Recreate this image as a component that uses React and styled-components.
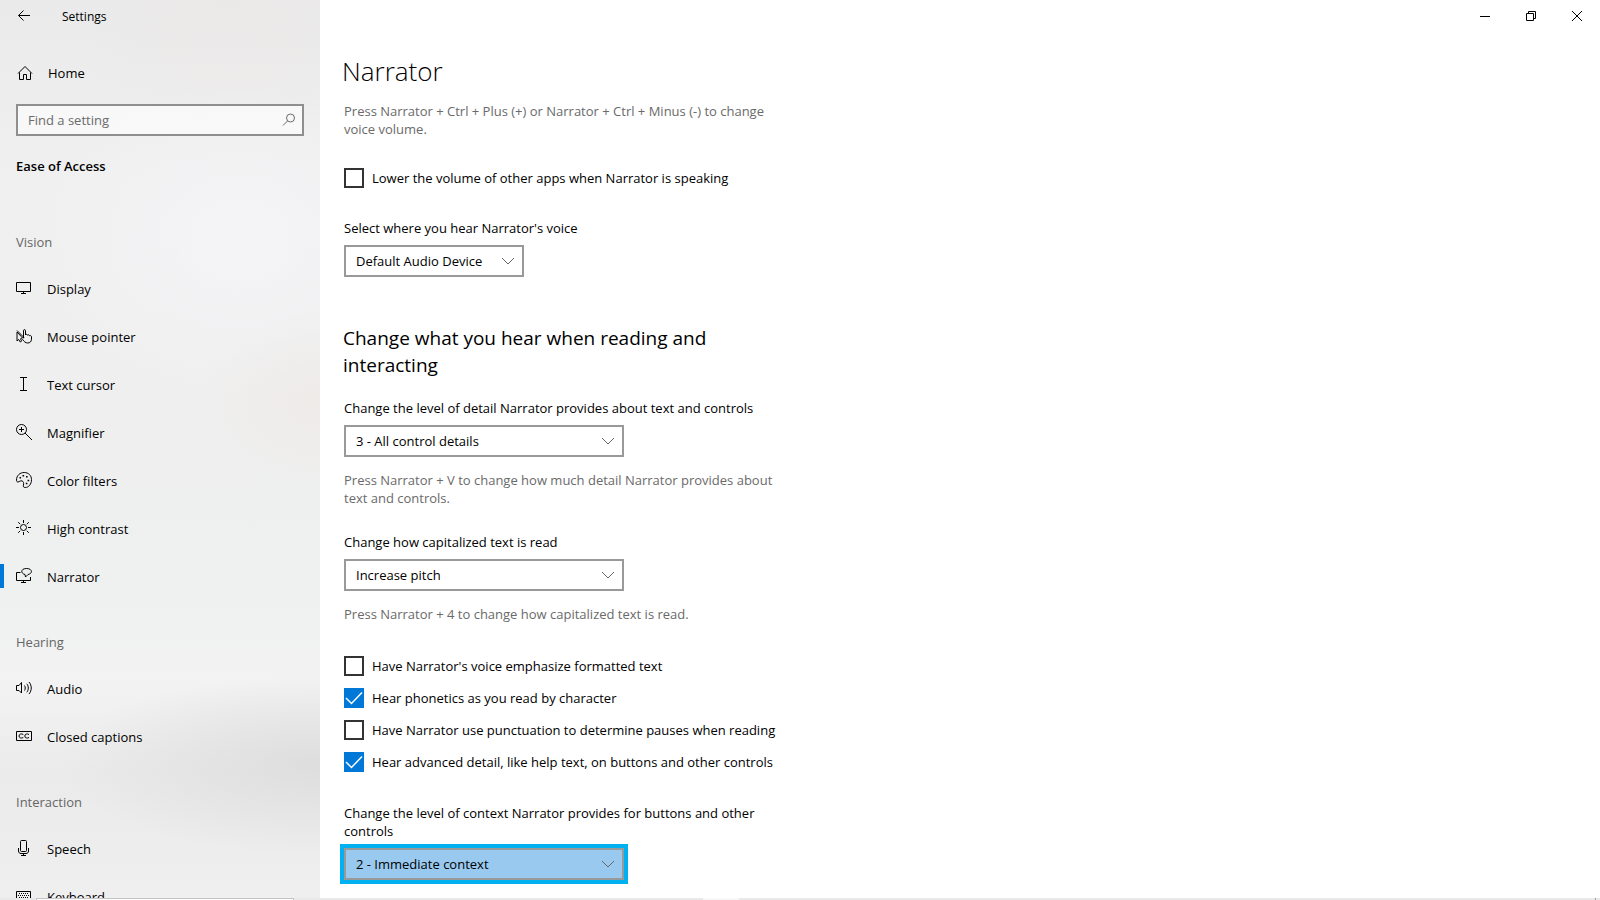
import React from "react";
import styled, { createGlobalStyle } from "styled-components";

const GlobalStyle = createGlobalStyle`
  *, *::before, *::after {
    box-sizing: border-box;
  }
  body {
    margin: 0;
    background-color: #fff;
    color: #000;
    font-family: "Open Sans", "Noto Sans", sans-serif;
    font-size: 13px;
    line-height: 18px;
  }
  button, input, select {
    font: inherit;
    color: inherit;
  }
`;

const Screen = styled.div`
  display: flex;
  flex-direction: column;
  height: 100vh;
  overflow: hidden;
`;

const Window = styled.div`
  display: flex;
  flex: 1;
  min-height: 0;
`;

const Taskbar = styled.footer`
  display: flex;
  height: 2px;
  background-color: #e9e9e9;
`;

const TaskbarSearch = styled.div`
  width: 258px;
  margin-left: 36px;
  border: 1px solid #c4c4c4;
  border-bottom: 0;
  background-color: #fdfdfd;
`;

const TaskbarActiveApp = styled.div`
  width: 36px;
  margin-left: 409px;
  background-color: #f8f8f8;
`;

const ShowDesktop = styled.div`
  width: 5px;
  margin-left: auto;
  border-left: 1px solid #a0a0a0;
`;

const Sidebar = styled.aside`
  display: flex;
  flex-direction: column;
  flex: 0 0 320px;
  overflow: hidden;
  background: radial-gradient(
      ellipse 260px 90px at 320px 765px,
      rgba(220, 220, 220, 0.9),
      transparent
    ),
    radial-gradient(
      ellipse 160px 120px at 230px 20px,
      rgba(236, 231, 230, 0.5),
      transparent
    ),
    radial-gradient(
      ellipse 120px 90px at 320px 400px,
      rgba(238, 234, 231, 0.8),
      transparent
    ),
    radial-gradient(
      ellipse 200px 160px at 240px 240px,
      rgba(245, 245, 248, 0.9),
      transparent
    ),
    linear-gradient(
      #eaeaea,
      #f0f0f0 180px,
      #efefef 420px,
      #eff0f0 600px,
      #f3f3f3 680px,
      #ebebeb 770px,
      #ececec 820px,
      #efefef
    );
`;

const SidebarTop = styled.div`
  display: flex;
  align-items: center;
  gap: 14px;
  height: 32px;
  font-size: 12px;
`;

const AppName = styled.span`
  padding-top: 2px;
`;

const CaptionButton = styled.button`
  display: flex;
  align-items: center;
  justify-content: center;
  width: ${props => props.$width || 46}px;
  height: 32px;
  padding: 0;
  border: 0;
  background: transparent;
`;

const Icon = styled.svg`
  flex: none;
  fill: none;
  stroke: currentColor;
  stroke-width: 1;
`;

const NavLink = styled.a`
  display: flex;
  align-items: center;
  gap: 15px;
  flex: none;
  position: relative;
  height: 48px;
  padding-left: 16px;
  color: inherit;
  text-decoration: none;
  &[aria-current="page"]::before {
    content: "";
    position: absolute;
    left: 0;
    top: 11px;
    width: 4px;
    height: 24px;
    background-color: #0078d7;
  }
`;

const HomeLink = styled(NavLink)`
  margin-top: 17px;
`;

const NavIcon = styled(Icon)`
  margin-bottom: 2px;
`;

const SearchBox = styled.label`
  display: flex;
  align-items: center;
  flex: none;
  height: 32px;
  margin: 7px 16px 0;
  padding: 0 6px 0 10px;
  border: 2px solid #8f8f8f;
  background-color: rgba(255, 255, 255, 0.6);
  color: #6a6a6a;
`;

const SearchInput = styled.input`
  flex: 1;
  min-width: 0;
  padding: 0;
  border: 0;
  outline: 0;
  background: transparent;
  &::placeholder {
    color: #6a6a6a;
    opacity: 1;
  }
`;

const Category = styled.h2`
  margin: 21px 16px 0;
  font-size: 13px;
  font-weight: 600;
`;

const GroupTitle = styled.h3`
  margin: 32px 16px 14px;
  font-size: 13px;
  font-weight: 400;
  color: #666;
`;

const Nav = styled.nav`
  display: flex;
  flex-direction: column;
  margin-top: 26px;
`;

const Main = styled.main`
  flex: 1;
  min-width: 0;
`;

const CaptionBar = styled.div`
  display: flex;
  justify-content: flex-end;
`;

const Content = styled.div`
  max-width: 472px;
  padding-left: 24px;
`;

const PageTitle = styled.h1`
  margin: 19px 0 11px -2px;
  font-size: 26px;
  font-weight: 300;
  line-height: 40px;
`;

const Hint = styled.p`
  margin: 0;
  color: #6a6a6a;
`;

const SectionTitle = styled.h2`
  max-width: 400px;
  margin: 48px 0 20px -1px;
  font-size: 19px;
  font-weight: 400;
  line-height: 27px;
`;

const Field = styled.div`
  margin-top: ${props => props.$space}px;
`;

const FieldLabel = styled.label`
  display: block;
  margin-bottom: 8px;
`;

const FieldHint = styled(Hint)`
  margin-top: 14px;
`;

const SelectWrapper = styled.div`
  display: grid;
  align-items: center;
  width: ${props => props.$width}px;
  color: #666;
`;

const Select = styled.select`
  grid-area: 1 / 1;
  appearance: none;
  height: 32px;
  padding: 0 32px 0 10px;
  border: 2px solid #999;
  border-radius: 0;
  background-color: ${props => (props.$focused ? "#99c9ef" : "#fff")};
  outline: ${props => (props.$focused ? "4px solid #00b0f0" : "0")};
  color: #000;
`;

const Chevron = styled(Icon)`
  grid-area: 1 / 1;
  justify-self: end;
  margin-right: 9px;
  pointer-events: none;
`;

const CheckRow = styled.label`
  display: flex;
  align-items: center;
  gap: 8px;
  min-height: 20px;
`;

const CheckBox = styled.span`
  display: grid;
  flex: none;
`;

const CheckInput = styled.input`
  grid-area: 1 / 1;
  appearance: none;
  width: 20px;
  height: 20px;
  margin: 0;
  border: 2px solid #333;
  background-color: #fff;
  &:checked {
    border-color: #0078d7;
    background-color: #0078d7;
  }
`;

const CheckMark = styled(Icon)`
  grid-area: 1 / 1;
  color: #fff;
  pointer-events: none;
`;

const CheckGroup = styled.div`
  display: grid;
  gap: 12px;
  margin-top: ${props => props.$space}px;
`;

const icons = {
  home: <path d="M2 8.500 9 1.500l7 7M3.500 7.500v7h4v-5h3v5h4v-7" />,
  display: <path d="M.5 2.500h14v9H.5zM7.500 11.500v2M5 13.500h5" />,
  mouse: (
    <path d="M5.500 8.800 1 4v9l1.600-1.600L4.200 14l1.300-.8-1-2.700M7.500 10V2.800c0-1.700 2-1.700 2 0V7c.3-1 1.800-.9 2 .2.500-.8 1.800-.5 2 .5.700-.5 2 0 2 1.100v2.400c0 2.300-1.500 3.800-3.700 3.800-2.500 0-3.800-1.600-5-3.300L5.300 10c.5-.9 1.500-.8 2.200 0M1 2.500l7 7" />
  ),
  cursor: <path d="M4 1.500h7M4 14.500h7M7.500 1.500v13" />,
  magnifier: (
    <>
      <circle cx="5.500" cy="5.500" r="5" />
      <path d="m9 9 7 7M5.500 3v5M3 5.500h5" />
    </>
  ),
  palette: (
    <>
      <path d="M.5 8C.5 3.500 4 .5 8.200.5c4.300 0 7.300 3 7.300 7.200 0 4.400-2.700 7.800-6.300 7.800-1.500 0-2.200-.8-1.800-2.300.5-2 .2-3.700-1.400-4.300C4.200 8.300 3.500 10 2 10 1 10 .5 9.300.5 8z" />
      <path
        strokeWidth="1.6"
        d="M3.500 5.800h1.600M6.500 3.800h1.600M10 4.800h1.600M11.600 8.500h1.600M9.800 11.500h1.600"
      />
    </>
  ),
  contrast: (
    <>
      <circle cx="7.500" cy="7.500" r="3" />
      <path d="M7.500 0v3M7.500 12v3M0 7.500h3M12 7.500h3M2.200 2.200l2 2M10.800 10.800l2 2M12.800 2.200l-2 2M4.200 10.800l-2 2" />
    </>
  ),
  narrator: (
    <path d="M4.500 4.500h-4v8h14V9M7.500 12.500v2M5 14.500h5M9 6.500C4.500 5.500 4.500.5 10.500.5s6.500 5 1.500 6L9.500 9z" />
  ),
  audio: (
    <path d="M.5 5.500v5H3L5.500 13V2.500L3 5.500zM8.500 5.500c1 1.500 1 3.500 0 5M10.800 3.800c2 2.500 2 6 0 8.500M13 2c3 3.500 3 8.500 0 12" />
  ),
  captions: (
    <path d="M.5 3.500h15v9H.5zM7.300 6.500C5.500 5.300 3 6 3 8s2.500 2.700 4.300 1.500M13 6.500C11.200 5.300 8.800 6 8.800 8s2.400 2.700 4.200 1.500" />
  ),
  speech: (
    <path d="M4.500 1.500a1 1 0 0 1 1-1h4a1 1 0 0 1 1 1v9a1 1 0 0 1-1 1h-4a1 1 0 0 1-1-1zM2.500 8v3c0 1.500 1 2.500 2.500 2.500h5c1.500 0 2.500-1 2.500-2.500V8M7.500 13.500v2M5 15.500h5" />
  ),
  keyboard: (
    <>
      <path d="M.5 3.500h14v10H.5z" />
      <path strokeDasharray="1 1" d="M3 5.500h10M2 7.500h11M3 9.500h10" />
      <path d="M4 11.500h7" />
    </>
  )
};

function NavItem({ icon, label, active }) {
  return (
    <NavLink href="#" aria-current={active ? "page" : undefined}>
      <NavIcon width="16" height="16" viewBox="0 0 16 16" aria-hidden="true">
        {icons[icon]}
      </NavIcon>
      {label}
    </NavLink>
  );
}

function SelectField({ id, label, value, width, space, focused }) {
  return (
    <Field $space={space}>
      <FieldLabel htmlFor={id}>{label}</FieldLabel>
      <SelectWrapper $width={width}>
        <Select id={id} defaultValue={value} $focused={focused}>
          <option>{value}</option>
        </Select>
        <Chevron width="14" height="8" viewBox="0 0 14 8" aria-hidden="true">
          <path d="m1 1 6 6 6-6" />
        </Chevron>
      </SelectWrapper>
    </Field>
  );
}

function Check({ label, checked }) {
  return (
    <CheckRow>
      <CheckBox>
        <CheckInput type="checkbox" defaultChecked={checked} />
        {checked && (
          <CheckMark width="20" height="20" viewBox="0 0 20 20">
            <path strokeWidth="1.5" d="m2 10 5.500 5.500L18 4.500" />
          </CheckMark>
        )}
      </CheckBox>
      {label}
    </CheckRow>
  );
}

const groups = [
  {
    title: "Vision",
    items: [
      ["display", "Display"],
      ["mouse", "Mouse pointer"],
      ["cursor", "Text cursor"],
      ["magnifier", "Magnifier"],
      ["palette", "Color filters"],
      ["contrast", "High contrast"],
      ["narrator", "Narrator"]
    ]
  },
  {
    title: "Hearing",
    items: [["audio", "Audio"], ["captions", "Closed captions"]]
  },
  {
    title: "Interaction",
    items: [["speech", "Speech"], ["keyboard", "Keyboard"]]
  }
];

function App() {
  return (
    <Screen>
      <GlobalStyle />
      <Window>
        <Sidebar>
          <SidebarTop>
            <CaptionButton $width={48} aria-label="Back">
              <Icon width="14" height="12" viewBox="0 0 14 12">
                <path d="M13 5.500H1.500M6.500.5l-5 5 5 5" />
              </Icon>
            </CaptionButton>
            <AppName>Settings</AppName>
          </SidebarTop>
          <HomeLink href="#">
            <Icon width="17" height="16" viewBox="0 0 17 16" aria-hidden="true">
              {icons.home}
            </Icon>
            Home
          </HomeLink>
          <SearchBox>
            <SearchInput
              type="text"
              placeholder="Find a setting"
              aria-label="Find a setting"
            />
            <Icon width="14" height="14" viewBox="0 0 14 14" aria-hidden="true">
              <circle cx="8.500" cy="5" r="4" />
              <path d="M5.500 8 1 12.500" />
            </Icon>
          </SearchBox>
          <Category>Ease of Access</Category>
          <Nav>
            {groups.map(group => (
              <React.Fragment key={group.title}>
                <GroupTitle>{group.title}</GroupTitle>
                {group.items.map(([icon, label]) => (
                  <NavItem
                    key={icon}
                    icon={icon}
                    label={label}
                    active={icon === "narrator"}
                  />
                ))}
              </React.Fragment>
            ))}
          </Nav>
        </Sidebar>
        <Main>
          <CaptionBar>
            <CaptionButton aria-label="Minimize">
              <Icon width="10" height="10" viewBox="0 0 10 10">
                <path d="M0 5.500h10" />
              </Icon>
            </CaptionButton>
            <CaptionButton aria-label="Restore">
              <Icon width="10" height="10" viewBox="0 0 10 10">
                <path d="M.5 2.500h7v7h-7zM2.500 2.500v-2h7v7h-2" />
              </Icon>
            </CaptionButton>
            <CaptionButton aria-label="Close">
              <Icon width="10" height="10" viewBox="0 0 10 10">
                <path d="m0 0 10 10M10 0 0 10" />
              </Icon>
            </CaptionButton>
          </CaptionBar>
          <Content>
            <PageTitle>Narrator</PageTitle>
            <Hint>
              Press Narrator + Ctrl + Plus (+) or Narrator + Ctrl + Minus (-) to
              change voice volume.
            </Hint>
            <CheckGroup $space={30}>
              <Check label="Lower the volume of other apps when Narrator is speaking" />
            </CheckGroup>
            <SelectField
              id="output"
              label="Select where you hear Narrator's voice"
              value="Default Audio Device"
              width={180}
              space={31}
            />
            <SectionTitle>
              Change what you hear when reading and interacting
            </SectionTitle>
            <SelectField
              id="detail"
              label="Change the level of detail Narrator provides about text and controls"
              value="3 - All control details"
              width={280}
              space={20}
            />
            <FieldHint>
              Press Narrator + V to change how much detail Narrator provides
              about text and controls.
            </FieldHint>
            <SelectField
              id="capitals"
              label="Change how capitalized text is read"
              value="Increase pitch"
              width={280}
              space={26}
            />
            <FieldHint>
              Press Narrator + 4 to change how capitalized text is read.
            </FieldHint>
            <CheckGroup $space={33}>
              <Check label="Have Narrator's voice emphasize formatted text" />
              <Check label="Hear phonetics as you read by character" checked />
              <Check label="Have Narrator use punctuation to determine pauses when reading" />
              <Check
                label="Hear advanced detail, like help text, on buttons and other controls"
                checked
              />
            </CheckGroup>
            <SelectField
              id="context"
              label="Change the level of context Narrator provides for buttons and other controls"
              value="2 - Immediate context"
              width={280}
              space={32}
              focused
            />
          </Content>
        </Main>
      </Window>
      <Taskbar>
        <TaskbarSearch />
        <TaskbarActiveApp />
        <ShowDesktop />
      </Taskbar>
    </Screen>
  );
}

export default App;
